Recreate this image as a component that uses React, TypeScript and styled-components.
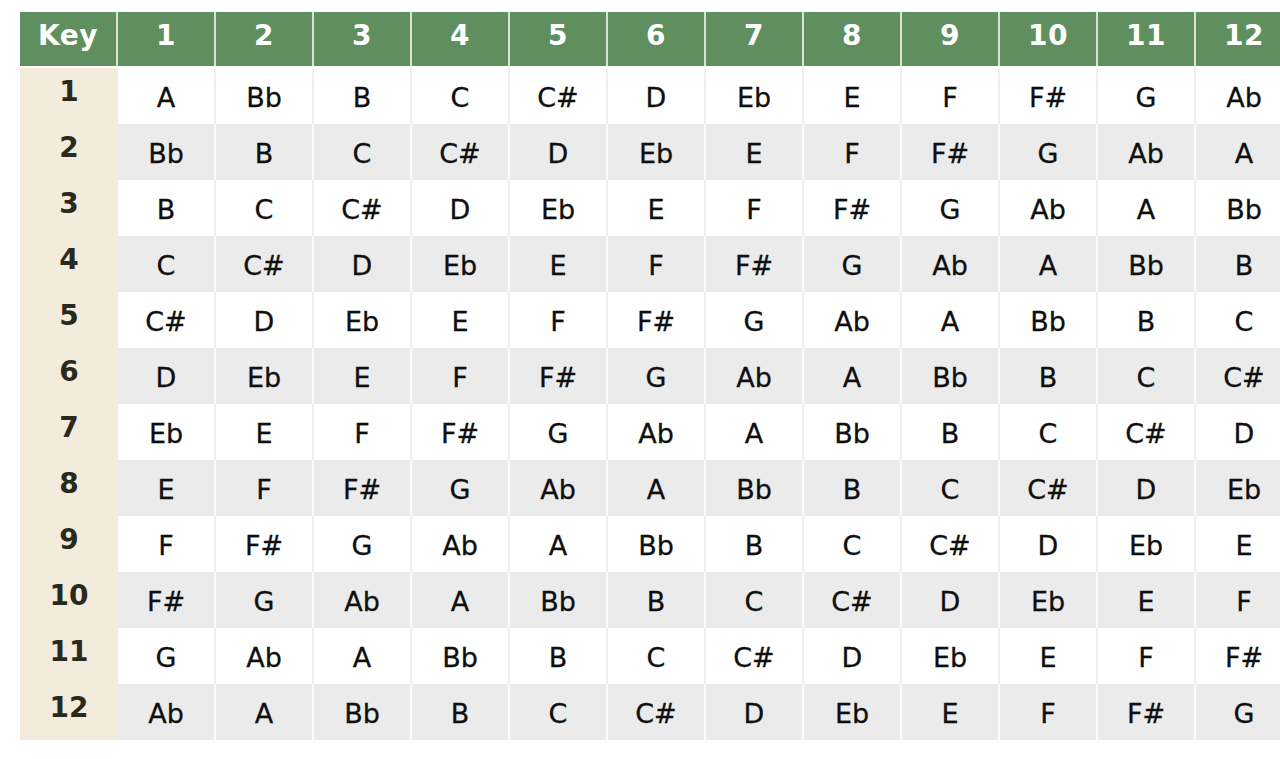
import React from "react";
import styled, { createGlobalStyle } from "styled-components";

const Global = createGlobalStyle`
  html, body { margin: 0; padding: 0; background: #ffffff; }
  body { font-family: "DejaVu Sans", "Liberation Sans", sans-serif; overflow: hidden; }
  #root { width: 1280px; height: 759px; overflow: hidden; }
`;

const NOTES = ["A", "Bb", "B", "C", "C#", "D", "Eb", "E", "F", "F#", "G", "Ab"];

const Page = styled.div`
  width: 1280px;
  height: 759px;
  padding: 12px 0 0 20px;
  box-sizing: border-box;
  overflow: hidden;
  background: #ffffff;
`;

const Table = styled.div`
  display: flex;
  flex-direction: column;
  width: 1272px;
`;

const HeaderRow = styled.div`
  display: grid;
  grid-template-columns: 96px repeat(12, 96px);
  column-gap: 2px;
  background: #d3e4cd;
  height: 54px;
  margin-bottom: 2px;
`;

const HeaderCell = styled.div`
  background: #5f8f5f;
  color: #ffffff;
  font-weight: bold;
  font-size: 28px;
  display: flex;
  align-items: center;
  justify-content: center;
  padding-bottom: 8px;
  box-sizing: border-box;
  letter-spacing: 0.5px;
`;

const Row = styled.div<{ $alt: boolean }>`
  display: grid;
  grid-template-columns: 96px repeat(12, 96px);
  column-gap: 2px;
  height: 56px;
  background: ${(p) => (p.$alt ? "#fbfbfb" : "#f1f1f1")};
`;

const KeyCell = styled.div`
  background: #f3ebdc;
  color: #2a2a1c;
  font-weight: bold;
  font-size: 28px;
  display: flex;
  align-items: center;
  justify-content: center;
  padding-bottom: 10px;
  box-sizing: border-box;
  margin-right: -2px;
`;

const NoteCell = styled.div<{ $alt: boolean }>`
  background: ${(p) => (p.$alt ? "#ebebeb" : "#ffffff")};
  color: #0f0f0f;
  font-size: 27px;
  display: flex;
  align-items: center;
  justify-content: center;
  padding-top: 3px;
  box-sizing: border-box;
  -webkit-text-stroke: 0.3px #0f0f0f;
`;

export default function App() {
  const cols = Array.from({ length: 12 }, (_, i) => i + 1);
  return (
    <Page>
      <Global />
      <Table>
        <HeaderRow>
          <HeaderCell>Key</HeaderCell>
          {cols.map((c) => (
            <HeaderCell key={c}>{c}</HeaderCell>
          ))}
        </HeaderRow>
        {cols.map((r) => {
          const alt = r % 2 === 0;
          return (
            <Row key={r} $alt={alt}>
              <KeyCell>{r}</KeyCell>
              {cols.map((c) => (
                <NoteCell key={c} $alt={alt}>
                  {NOTES[(r - 1 + c - 1) % 12]}
                </NoteCell>
              ))}
            </Row>
          );
        })}
      </Table>
    </Page>
  );
}
